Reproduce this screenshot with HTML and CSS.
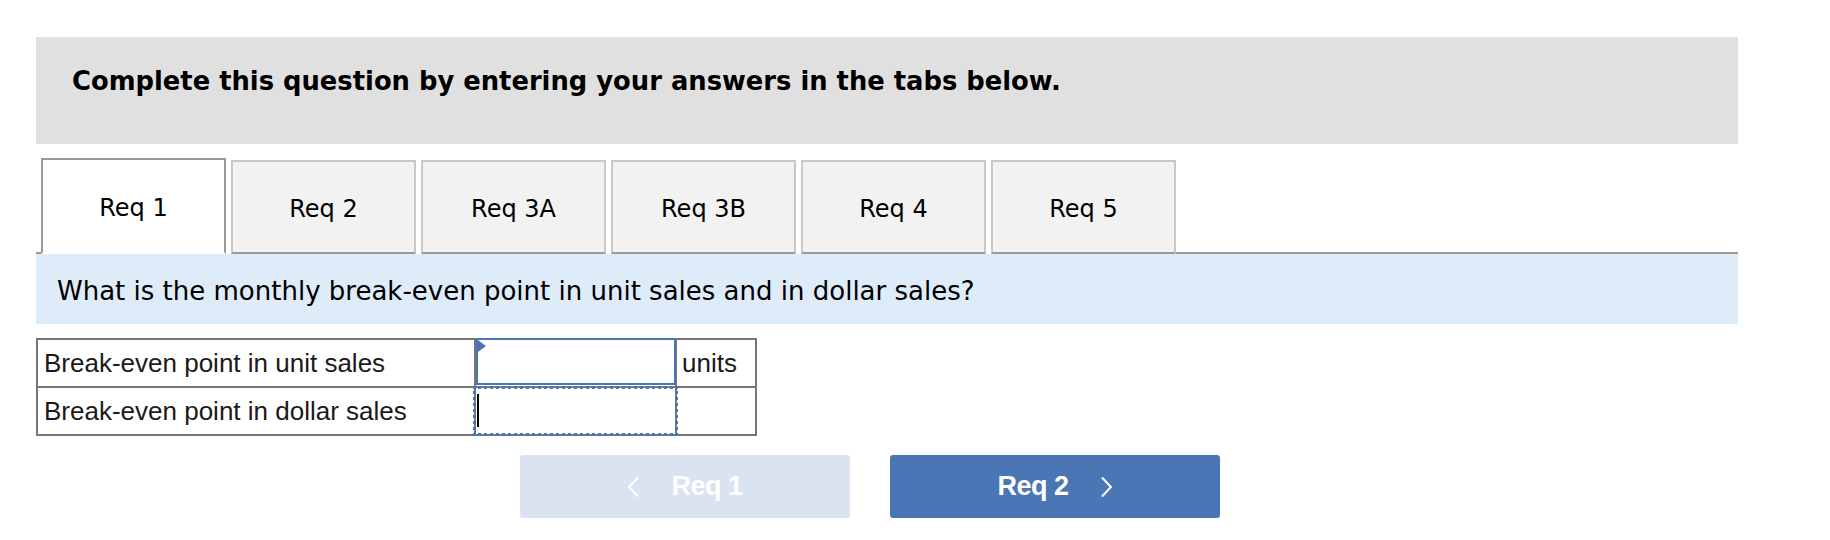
FILE: index.html
```html
<!DOCTYPE html>
<html>
<head>
<meta charset="utf-8">
<link rel="stylesheet" href="styles.css">
</head>
<body>
<div class="page">
  <div class="instructions">
    <h1 class="instructions-title">Complete this question by entering your answers in the tabs below.</h1>
  </div>

  <div class="tabs">
    <div class="tab tab-active">Req 1</div>
    <div class="tab">Req 2</div>
    <div class="tab">Req 3A</div>
    <div class="tab">Req 3B</div>
    <div class="tab">Req 4</div>
    <div class="tab">Req 5</div>
    <div class="tabs-fill"></div>
  </div>

  <div class="question">What is the monthly break-even point in unit sales and in dollar sales?</div>

  <table class="answer-table">
    <tr>
      <td class="label">Break-even point in unit sales</td>
      <td class="input-cell"><div class="input input-focus"><span class="flag"></span></div></td>
      <td class="unit">units</td>
    </tr>
    <tr>
      <td class="label">Break-even point in dollar sales</td>
      <td class="input-cell"><div class="input input-dotted"><span class="caret"></span></div></td>
      <td class="unit"></td>
    </tr>
  </table>

  <div class="nav">
    <button class="nav-btn nav-prev"><span class="chev">
      <svg width="12" height="22" viewBox="0 0 12 22"><path d="M11 1.5 L2 11 L11 20.5" fill="none" stroke="#ffffff" stroke-width="2"/></svg>
    </span>Req 1</button>
    <button class="nav-btn nav-next">Req 2<span class="chev chev-right">
      <svg width="12" height="22" viewBox="0 0 12 22"><path d="M1 1.5 L10 11 L1 20.5" fill="none" stroke="#ffffff" stroke-width="2"/></svg>
    </span></button>
  </div>
</div>
</body>
</html>
```

FILE: styles.css
```css
html, body {
  margin: 0;
  padding: 0;
  background: #ffffff;
}

.page {
  padding: 37px 0 0 36px;
  width: 1702px;
}

.instructions {
  background: #e0e0e0;
  height: 107px;
  padding: 29px 0 0 36px;
  box-sizing: border-box;
}

.instructions-title {
  margin: 0;
  font-family: "DejaVu Sans", Verdana, sans-serif;
  font-weight: bold;
  font-size: 25.8px;
  color: #000000;
}

.tabs {
  display: flex;
  align-items: flex-end;
  margin-top: 14px;
  height: 96px;
  gap: 5px;
}

.tab {
  width: 185px;
  height: 94px;
  box-sizing: border-box;
  border: 2px solid #c8c8c8;
  border-bottom: 2px solid #999999;
  background: #f2f2f2;
  font-family: "DejaVu Sans", Verdana, sans-serif;
  font-size: 24px;
  color: #000000;
  display: flex;
  align-items: center;
  justify-content: center;
  padding-top: 4px;
}

.tab:first-child {
  margin-left: 5px;
  position: relative;
}

.tab:first-child::before {
  content: "";
  position: absolute;
  left: -7px;
  bottom: -2px;
  width: 5px;
  height: 2px;
  background: #999999;
}

.tab-active {
  background: #ffffff;
  border-color: #999999;
  border-bottom: 2px solid #ffffff;
  height: 96px;
}

.tabs-fill {
  flex: 1;
  height: 0;
  border-bottom: 2px solid #999999;
  margin-left: -5px;
}

.question {
  background: #deebf8;
  height: 70px;
  display: flex;
  align-items: center;
  padding-left: 21px;
  padding-top: 3px;
  font-family: "DejaVu Sans", Verdana, sans-serif;
  font-size: 26px;
  color: #000000;
  box-sizing: border-box;
}

.answer-table {
  margin-top: 14px;
  border-collapse: collapse;
  font-family: "Liberation Sans", Arial, sans-serif;
  font-size: 26px;
  color: #1a1a1a;
}

.answer-table td {
  border: 2px solid #777777;
  height: 48px;
  padding: 0;
  box-sizing: border-box;
}

.label {
  width: 438px;
  padding-left: 6px !important;
}

.input-cell {
  width: 201px;
  position: relative;
}

.input {
  position: absolute;
  box-sizing: border-box;
}

.input-focus {
  left: 0;
  top: -2px;
  right: -1px;
  bottom: 1px;
  border: 2px solid #4a76b5;
}

.flag {
  position: absolute;
  left: 0;
  top: 0;
  width: 0;
  height: 0;
  border-top: 6px solid transparent;
  border-bottom: 6px solid transparent;
  border-left: 8px solid #4a76b5;
}

.input-dotted {
  left: -3px;
  top: -2px;
  right: -3px;
  bottom: -2px;
  border: 3px dotted #4a76b5;
}

.caret {
  position: absolute;
  left: 1px;
  top: 5px;
  width: 2px;
  height: 33px;
  background: #000000;
}

.unit {
  width: 80px;
  padding-left: 5px !important;
}

.nav {
  display: flex;
  gap: 40px;
  margin-top: 19px;
  margin-left: 484px;
}

.nav-btn {
  width: 330px;
  height: 63px;
  border: none;
  border-radius: 3px;
  font-family: "Liberation Sans", Arial, sans-serif;
  font-weight: bold;
  font-size: 27px;
  color: #ffffff;
  display: flex;
  align-items: center;
  justify-content: center;
  padding: 0;
  letter-spacing: -0.5px;
}

.nav-prev {
  background: #dae3ef;
}

.nav-next {
  background: #4a76b5;
}

.chev {
  display: inline-flex;
  margin-right: 32px;
}

.chev-right {
  margin-right: 0;
  margin-left: 32px;
}
```
